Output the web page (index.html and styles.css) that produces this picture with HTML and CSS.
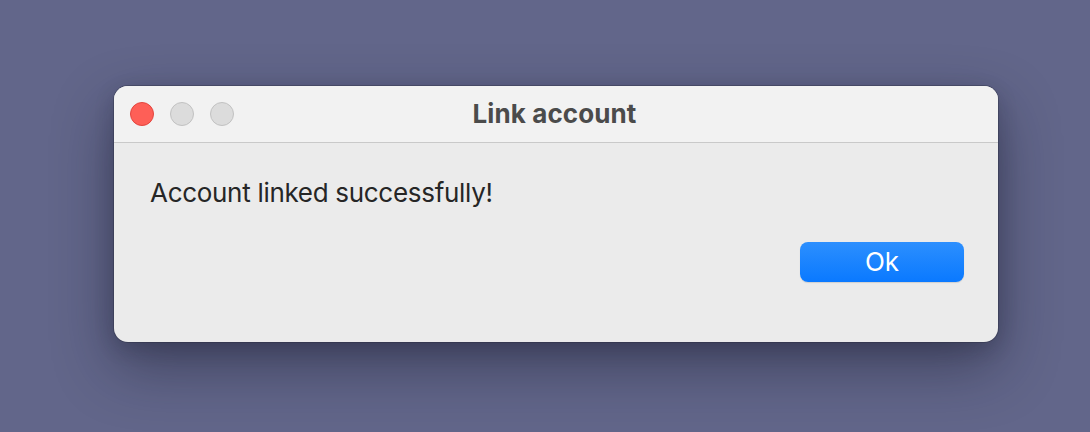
FILE: index.html
```html
<!DOCTYPE html>
<html lang="en">
<head>
<meta charset="utf-8">
<title>Link account</title>
<link rel="stylesheet" href="styles.css">
</head>
<body>
  <div class="window">
    <div class="titlebar">
      <div class="lights">
        <span class="light close"></span>
        <span class="light min"></span>
        <span class="light max"></span>
      </div>
      <div class="title">Link account</div>
      <div class="spacer"></div>
    </div>
    <div class="content">
      <p class="message">Account linked successfully!</p>
      <div class="actions">
        <button class="btn-primary" type="button">Ok</button>
      </div>
    </div>
  </div>
</body>
</html>
```

FILE: styles.css
```css
html, body {
  margin: 0;
  padding: 0;
}
body {
  width: 1090px;
  height: 432px;
  background: #62668a;
  font-family: "Inter", "Liberation Sans", sans-serif;
  padding: 86px 0 0 114px;
  box-sizing: border-box;
  overflow: hidden;
}
.window {
  width: 884px;
  height: 256px;
  border-radius: 14px;
  background: #ebebeb;
  overflow: hidden;
  box-shadow: 0 0 0 1px rgba(40, 42, 60, 0.35),
              0 24px 60px rgba(20, 22, 40, 0.45),
              0 6px 20px rgba(20, 22, 40, 0.2);
  display: flex;
  flex-direction: column;
}
.titlebar {
  height: 56px;
  flex: none;
  background: #f2f2f2;
  border-bottom: 1px solid #c9c9c9;
  display: grid;
  grid-template-columns: 1fr auto 1fr;
  align-items: center;
}
.lights {
  display: flex;
  gap: 16px;
  padding-left: 16px;
}
.light {
  width: 22px;
  height: 22px;
  border-radius: 50%;
  background: #dcdcdc;
  border: 1px solid #c2c2c2;
}
.light.close {
  background: #fe5f57;
  border-color: #e3453e;
}
.title {
  font-size: 26px;
  font-weight: 700;
  color: #4b4b4b;
  letter-spacing: 0.1px;
  margin-right: 3px;
  margin-top: -2px;
}
.content {
  flex: 1;
  padding: 34px 34px 0 36px;
}
.message {
  margin: 0;
  font-size: 26px;
  line-height: 32px;
  letter-spacing: -0.3px;
  color: #262626;
}
.actions {
  display: flex;
  justify-content: flex-end;
  margin-top: 33px;
}
.btn-primary {
  width: 164px;
  height: 40px;
  border: none;
  border-radius: 8px;
  background: linear-gradient(#2c8ffe, #0a79ff);
  color: #ffffff;
  font-family: "Inter", "Liberation Sans", sans-serif;
  font-size: 26px;
  line-height: 40px;
  padding: 0;
  box-shadow: 0 1px 1px rgba(0, 0, 0, 0.12);
}
```
